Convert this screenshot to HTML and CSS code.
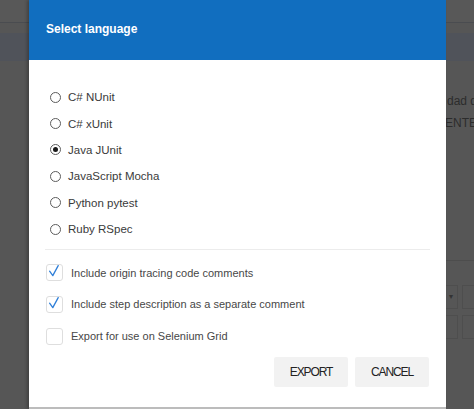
FILE: index.html
```html
<!DOCTYPE html>
<html>
<head>
<meta charset="utf-8">
<link rel="stylesheet" href="styles.css">
</head>
<body>
<div class="backdrop">
  <div class="bg-topbar"></div>
  <div class="bg-text bg-t1">dad de</div>
  <div class="bg-text bg-t2">ENTER</div>
  <div class="bg-table">
    <div class="bg-row"><span class="bg-cell caret">&#9662;</span><span class="bg-cell"></span></div>
    <div class="bg-row"><span class="bg-cell"></span><span class="bg-cell"></span></div>
  </div>
</div>
<div class="dialog">
  <div class="dialog-header">Select language</div>
  <div class="dialog-body">
    <div class="radio-list">
      <label class="radio-row"><span class="radio"></span>C# NUnit</label>
      <label class="radio-row"><span class="radio"></span>C# xUnit</label>
      <label class="radio-row"><span class="radio checked"></span>Java JUnit</label>
      <label class="radio-row"><span class="radio"></span>JavaScript Mocha</label>
      <label class="radio-row"><span class="radio"></span>Python pytest</label>
      <label class="radio-row"><span class="radio"></span>Ruby RSpec</label>
    </div>
    <div class="separator"></div>
    <div class="check-list">
      <label class="check-row"><span class="checkbox"><svg viewBox="0 0 17 17" width="17" height="17"><path d="M3.6 7.2 L6.8 11.6 L12.2 1.6" fill="none" stroke="#2f7fd8" stroke-width="1.3" stroke-linecap="round" stroke-linejoin="round"/></svg></span>Include origin tracing code comments</label>
      <label class="check-row"><span class="checkbox"><svg viewBox="0 0 17 17" width="17" height="17"><path d="M3.6 7.2 L6.8 11.6 L12.2 1.6" fill="none" stroke="#2f7fd8" stroke-width="1.3" stroke-linecap="round" stroke-linejoin="round"/></svg></span>Include step description as a separate comment</label>
      <label class="check-row"><span class="checkbox"></span>Export for use on Selenium Grid</label>
    </div>
    <div class="actions">
      <button class="btn">EXPORT</button>
      <button class="btn">CANCEL</button>
    </div>
  </div>
</div>
</body>
</html>
```

FILE: styles.css
```css
html, body {
  margin: 0;
  padding: 0;
  width: 474px;
  height: 409px;
  overflow: hidden;
  background: #555555;
  font-family: "Liberation Sans", Arial, sans-serif;
}

.backdrop {
  position: absolute;
  inset: 0;
  background: #565656;
}

.bg-topbar {
  height: 22px;
  border-bottom: 1px solid #4a4c50;
  background: #585858;
}
.bg-topbar::after {
  content: "";
  display: block;
  position: absolute;
  top: 33px;
  left: 0;
  width: 474px;
  height: 28px;
  background: #50535a;
}

.bg-text {
  position: absolute;
  font-size: 12px;
  color: #2c2c2c;
  white-space: nowrap;
}
.bg-t1 { top: 94px; left: 447px; }
.bg-t2 { top: 116px; left: 445px; }

.bg-table {
  position: absolute;
  left: 440px;
  top: 260px;
  width: 40px;
  border-top: 1px solid #4d4d4d;
  padding-top: 24px;
  display: flex;
  flex-direction: column;
  gap: 6px;
}
.bg-row {
  display: flex;
  gap: 4px;
  height: 24px;
}
.bg-cell {
  width: 22px;
  border: 1px solid #4e4e4e;
  font-size: 8px;
  color: #333;
  line-height: 22px;
  padding-left: 8px;
  box-sizing: border-box;
}

.dialog {
  position: absolute;
  left: 29px;
  top: 0;
  width: 417px;
  height: 407px;
  background: #ffffff;
  border-bottom: 2px solid #bcbcbc;
  box-shadow: -2px 0 3px rgba(0,0,0,0.25);
  display: flex;
  flex-direction: column;
}

.dialog-header {
  height: 60px;
  background: #116ebf;
  color: #ffffff;
  font-weight: bold;
  font-size: 12px;
  display: flex;
  align-items: center;
  padding-left: 17px;
  padding-bottom: 3px;
  box-sizing: border-box;
}

.dialog-body {
  padding: 24px 17px 0 17px;
  display: flex;
  flex-direction: column;
}

.radio-list {
  display: flex;
  flex-direction: column;
}

.radio-row {
  height: 26.4px;
  display: flex;
  align-items: center;
  font-size: 11.5px;
  color: #3a3a3a;
  padding-left: 4px;
}

.radio {
  width: 11px;
  height: 11px;
  border: 1px solid #5c5c5c;
  border-radius: 50%;
  box-sizing: border-box;
  margin-right: 7px;
  position: relative;
  flex: none;
}
.radio.checked::after {
  content: "";
  position: absolute;
  left: 2px;
  top: 2px;
  width: 5px;
  height: 5px;
  border-radius: 50%;
  background: #1a1a1a;
}

.separator {
  height: 1px;
  background: #ececec;
  margin: 7px -1px 6.5px -1px;
}

.check-list {
  display: flex;
  flex-direction: column;
}

.check-row {
  height: 31.7px;
  display: flex;
  align-items: center;
  font-size: 11px;
  color: #474747;
}

.checkbox {
  width: 17px;
  height: 17px;
  border: 1px solid #dedede;
  border-radius: 3px;
  box-sizing: border-box;
  margin-right: 8px;
  flex: none;
  position: relative;
}
.checkbox svg {
  position: absolute;
  left: -1px;
  top: -1px;
}

.actions {
  display: flex;
  justify-content: flex-end;
  gap: 7px;
  margin-top: 5.5px;
}

.btn {
  width: 74px;
  height: 30px;
  border: none;
  border-radius: 2px;
  background: #f2f2f2;
  font-family: "Liberation Sans", Arial, sans-serif;
  font-size: 12px;
  letter-spacing: -1.1px;
  color: #222;
  padding: 0;
}
```
